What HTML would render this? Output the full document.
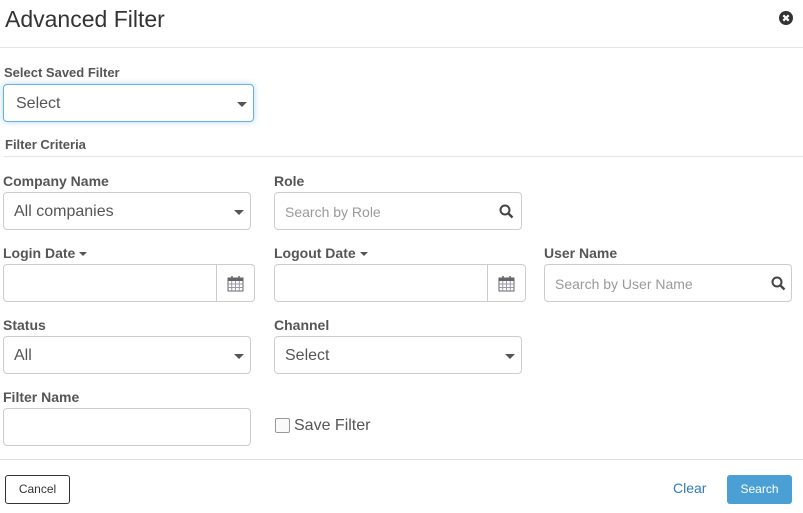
<!DOCTYPE html>
<html><head><style>
*{box-sizing:border-box;margin:0;padding:0}
body{width:803px;height:513px;background:#fff;font-family:"Liberation Sans",sans-serif;position:relative;overflow:hidden;color:#555}
.a{position:absolute}
.t{left:5px;top:6px;font-size:23px;color:#333}
.l{font-size:14px;font-weight:bold;color:#555}
.hr{height:1px;background:#e5e5e5;left:0;right:0}
.b{border:1px solid #ccc;border-radius:4px;background:#fff;height:38px}
.v{font-size:16px;color:#555;position:absolute;left:10px;top:10px}
.ph{font-size:14px;color:#999;position:absolute;left:10px;top:11px}
.c{position:absolute;right:6px;top:17px;width:0;height:0;border-left:5px solid transparent;border-right:5px solid transparent;border-top:5px solid #555}
.ad{position:absolute;right:0;top:0;width:38px;height:36px;border-left:1px solid #ccc;background:#fff;border-radius:0 4px 4px 0}
.ad svg,.s{position:absolute}
.tri{display:inline-block;width:0;height:0;border-left:4px solid transparent;border-right:4px solid transparent;border-top:4px solid #555;vertical-align:middle;margin-left:4px}
</style></head><body>
<div class="a t">Advanced Filter</div>
<svg class="a" style="left:779px;top:11px" width="14" height="14" viewBox="0 0 14 14"><circle cx="7" cy="7" r="7" fill="#333"/><path d="M4.3 4.3L9.7 9.7M9.7 4.3L4.3 9.7" stroke="#fff" stroke-width="2.2"/></svg>
<div class="a hr" style="top:47px"></div>
<div class="a l" style="left:4px;top:65px;font-size:13px">Select Saved Filter</div>
<div class="a b" style="left:3px;top:84px;width:251px;border-color:#66afe9;box-shadow:0 0 6px rgba(102,175,233,.5)"><span class="v" style="left:12px">Select</span><i class="c"></i></div>
<div class="a l" style="left:5px;top:137px;font-size:13px">Filter Criteria</div>
<div class="a hr" style="top:156px;left:4px"></div>

<div class="a l" style="left:3px;top:173px">Company Name</div>
<div class="a b" style="left:3px;top:192px;width:248px"><span class="v">All companies</span><i class="c"></i></div>
<div class="a l" style="left:274px;top:173px">Role</div>
<div class="a b" style="left:274px;top:192px;width:248px"><span class="ph">Search by Role</span>
<svg class="s" style="right:7px;top:11px" width="15" height="15" viewBox="0 0 15 15"><circle cx="6" cy="6" r="4.5" fill="none" stroke="#444" stroke-width="2"/><path d="M9.3 9.3L13.5 13.5" stroke="#444" stroke-width="2.4"/></svg></div>

<div class="a l" style="left:3px;top:245px">Login Date<i class="tri"></i></div>
<div class="a b" style="left:3px;top:264px;width:252px"><div class="ad"><svg style="left:10px;top:10px" width="17" height="17" viewBox="0 0 17 17"><rect x="1" y="3" width="15" height="13" fill="#fff" stroke="#666"/><rect x="1" y="3" width="15" height="3" fill="#666"/><path d="M1 9h15M1 12.5h15M4.7 6v10M8.5 6v10M12.3 6v10" stroke="#99a" stroke-width="1"/><path d="M5 1v4M12 1v4" stroke="#666" stroke-width="1.5"/></svg></div></div>
<div class="a l" style="left:274px;top:245px">Logout Date<i class="tri"></i></div>
<div class="a b" style="left:274px;top:264px;width:252px"><div class="ad"><svg style="left:10px;top:10px" width="17" height="17" viewBox="0 0 17 17"><rect x="1" y="3" width="15" height="13" fill="#fff" stroke="#666"/><rect x="1" y="3" width="15" height="3" fill="#666"/><path d="M1 9h15M1 12.5h15M4.7 6v10M8.5 6v10M12.3 6v10" stroke="#99a" stroke-width="1"/><path d="M5 1v4M12 1v4" stroke="#666" stroke-width="1.5"/></svg></div></div>
<div class="a l" style="left:544px;top:245px">User Name</div>
<div class="a b" style="left:544px;top:264px;width:248px"><span class="ph">Search by User Name</span>
<svg class="s" style="right:5px;top:11px" width="15" height="15" viewBox="0 0 15 15"><circle cx="6" cy="6" r="4.5" fill="none" stroke="#444" stroke-width="2"/><path d="M9.3 9.3L13.5 13.5" stroke="#444" stroke-width="2.4"/></svg></div>

<div class="a l" style="left:3px;top:317px">Status</div>
<div class="a b" style="left:3px;top:336px;width:248px"><span class="v">All</span><i class="c"></i></div>
<div class="a l" style="left:274px;top:317px">Channel</div>
<div class="a b" style="left:274px;top:336px;width:248px"><span class="v">Select</span><i class="c"></i></div>

<div class="a l" style="left:3px;top:389px">Filter Name</div>
<div class="a b" style="left:3px;top:408px;width:248px"></div>
<div class="a" style="left:275px;top:418px;width:15px;height:15px;border:1px solid #999;border-radius:2px;background:#fafafa"></div>
<div class="a" style="left:294px;top:417px;font-size:16px;color:#555">Save Filter</div>

<div class="a hr" style="top:459px;background:#ddd"></div>
<div class="a" style="left:5px;top:475px;width:65px;height:29px;border:1px solid #333;border-radius:3px;font-size:12px;color:#333;text-align:center;line-height:27px">Cancel</div>
<div class="a" style="left:673px;top:480px;font-size:14px;color:#337ab7">Clear</div>
<div class="a" style="left:727px;top:475px;width:65px;height:29px;background:#4a9fd4;border-radius:3px;font-size:12px;color:#fff;text-align:center;line-height:29px">Search</div>
</body></html>
